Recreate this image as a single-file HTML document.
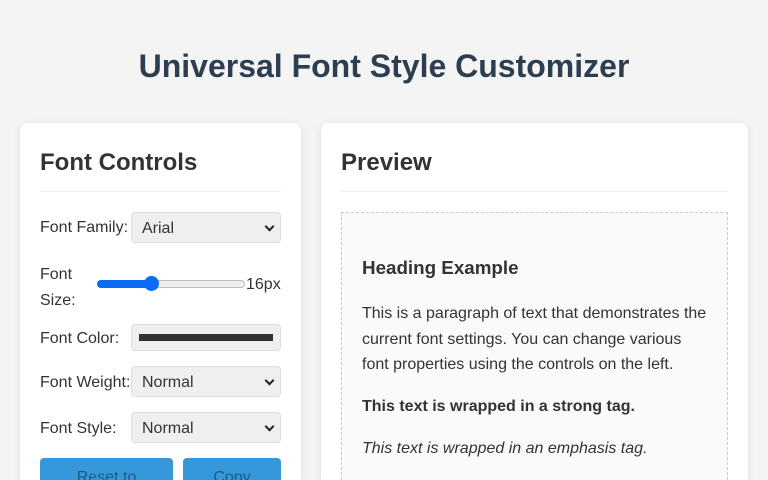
<!DOCTYPE html>
<html><head><meta charset="utf-8"><style>
*{box-sizing:border-box;margin:0;padding:0}
html,body{width:768px;height:480px;overflow:hidden}
body{background:#f4f4f4;font-family:"Liberation Sans",Arial,sans-serif;color:#333;position:relative}
.a{position:absolute;white-space:nowrap}
h1{position:absolute;left:0;width:768px;top:48px;text-align:center;font-size:32px;font-weight:bold;color:#2c3e50}
.card{position:absolute;background:#fff;border-radius:8px 8px 0 0;box-shadow:0 2px 8px rgba(0,0,0,0.1);top:123px;height:357px}
.h2{font-size:24px;font-weight:bold;color:#333}
.hr{position:absolute;height:1px;background:#eee}
.lbl{font-size:16px;color:#333}
.sel{position:absolute;left:131px;width:150px;height:31px;background:#efefef;border:1px solid #ddd;border-radius:4px;font-size:16px;padding:7px 0 0 10px;color:#333}
.sel:after{content:"";position:absolute;right:7px;top:10px;width:5px;height:5px;border-right:2px solid #222;border-bottom:2px solid #222;transform:rotate(45deg)}
.btn{position:absolute;top:458px;height:22px;overflow:hidden;background:#3498db;border-radius:4px 4px 0 0;color:#1d5b85;font-size:16px;text-align:center;padding-top:11px;line-height:18px}
p.t{font-size:16px;line-height:25.6px;color:#333}
</style></head><body>
<h1>Universal Font Style Customizer</h1>
<div class="card" style="left:20px;width:281px"></div>
<div class="card" style="left:321px;width:427px"></div>
<div class="a h2" style="left:40px;top:149px">Font Controls</div>
<div class="hr" style="left:40px;width:241px;top:191px"></div>
<div class="a lbl" style="left:40px;top:219px">Font Family:</div>
<div class="sel" style="top:212px">Arial</div>
<div class="a lbl" style="left:40px;top:262px;line-height:26px">Font<br>Size:</div>
<div class="a" style="left:97px;top:280px;width:148px;height:8px;border:1px solid #bbb;border-radius:4px;background:#efefef"></div>
<div class="a" style="left:97px;top:280px;width:54px;height:8px;border-radius:4px;background:#0a6cf5"></div>
<div class="a" style="left:144px;top:276px;width:15px;height:15px;border-radius:50%;background:#0a6cf5"></div>
<div class="a lbl" style="left:246px;top:276px">16px</div>
<div class="a lbl" style="left:40px;top:330px">Font Color:</div>
<div class="a" style="left:131px;top:324px;width:150px;height:27px;background:#efefef;border:1px solid #ddd;border-radius:4px"></div>
<div class="a" style="left:139px;top:334px;width:134px;height:7px;background:#333"></div>
<div class="a lbl" style="left:40px;top:374px">Font Weight:</div>
<div class="sel" style="top:366px">Normal</div>
<div class="a lbl" style="left:40px;top:420px">Font Style:</div>
<div class="sel" style="top:412px">Normal</div>
<div class="btn" style="left:40px;width:133px">Reset to</div>
<div class="btn" style="left:183px;width:98px">Copy</div>

<div class="a h2" style="left:341px;top:149px">Preview</div>
<div class="hr" style="left:341px;width:387px;top:191px"></div>
<div class="a" style="left:341px;top:212px;width:387px;height:268px;background:#fafafa;border:1px dashed #ccc;border-bottom:none"></div>
<div class="a" style="left:362px;top:257px;font-size:18.8px;font-weight:bold">Heading Example</div>
<div class="a" style="left:362px;top:301px;white-space:normal;width:350px"><p class="t">This is a paragraph of text that demonstrates the current font settings. You can change various font properties using the controls on the left.</p></div>
<div class="a" style="left:362px;top:398px;font-weight:bold;font-size:16px">This text is wrapped in a strong tag.</div>
<div class="a" style="left:362px;top:440px;font-style:italic;font-size:16px">This text is wrapped in an emphasis tag.</div>
</body></html>
